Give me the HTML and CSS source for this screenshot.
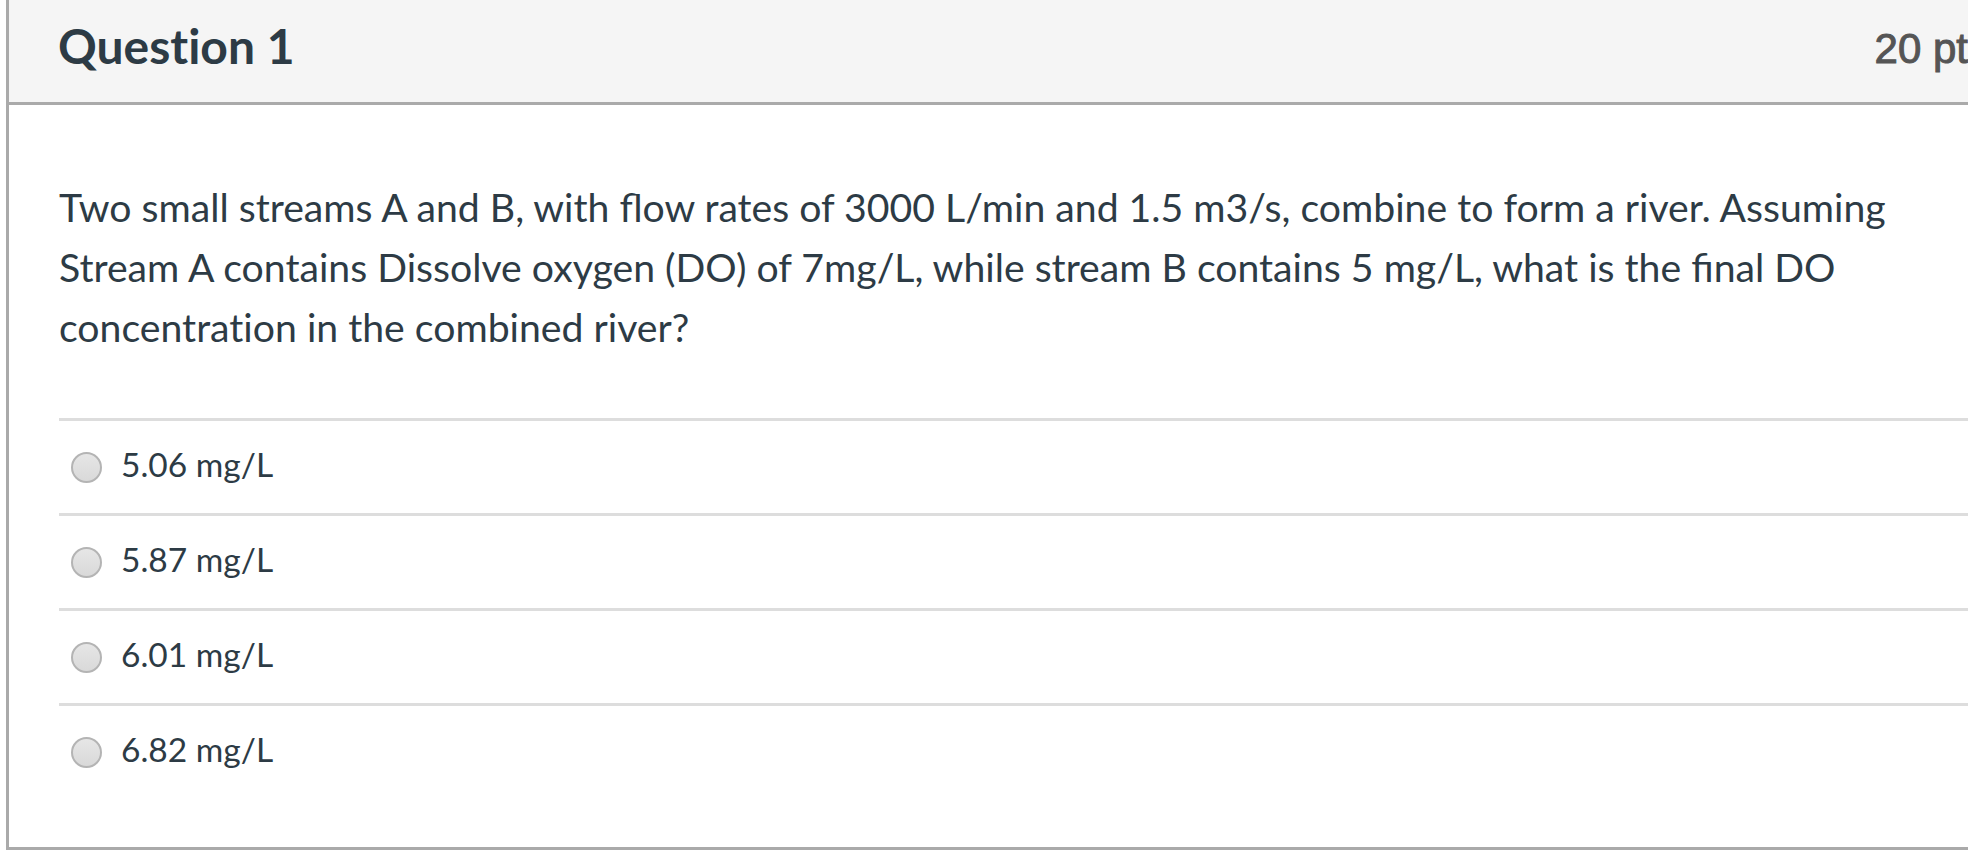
FILE: index.html
```html
<!DOCTYPE html>
<html lang="en">
<head>
<meta charset="utf-8">
<title>Question 1</title>
<link rel="stylesheet" href="styles.css">
</head>
<body>
<div class="question">
  <div class="q-header">
    <span class="q-name">Question 1</span>
    <span class="q-points">20 pts</span>
  </div>
  <div class="q-body">
    <div class="q-text">Two small streams A and B, with ﬂow rates of 3000 L/min and 1.5 m3/s, combine to form a river. Assuming Stream A contains Dissolve oxygen (DO) of 7mg/L, while stream B contains 5 mg/L, what is the ﬁnal DO concentration in the combined river?</div>
    <div class="answers">
      <label class="answer"><span class="radio"></span><span class="answer-text">5.06 mg/L</span></label>
      <label class="answer"><span class="radio"></span><span class="answer-text">5.87 mg/L</span></label>
      <label class="answer"><span class="radio"></span><span class="answer-text">6.01 mg/L</span></label>
      <label class="answer"><span class="radio"></span><span class="answer-text">6.82 mg/L</span></label>
    </div>
  </div>
</div>
</body>
</html>
```

FILE: styles.css
```css
html, body {
  margin: 0;
  padding: 0;
  background: #ffffff;
  overflow: hidden;
}

body {
  font-family: Lato, "Open Sans", sans-serif;
  color: #2d3b45;
  font-variant-ligatures: none;
  font-feature-settings: "liga" 0, "clig" 0;
}

.question {
  margin-left: 6px;
  width: 2036px;
  border: 3px solid #aaaaaa;
  border-top: none;
  box-sizing: border-box;
}

.q-header {
  display: flex;
  justify-content: space-between;
  align-items: flex-start;
  background: #f5f5f5;
  border-bottom: 3px solid #aaaaaa;
  padding: 17px 50px 27px 49px;
  height: 58px;
}

.q-name {
  font-family: Lato, sans-serif;
  font-weight: 700;
  font-size: 48px;
  line-height: 58px;
  color: #2d3b45;
}

.q-points {
  font-family: "Liberation Sans", Arial, sans-serif;
  font-weight: 400;
  font-size: 42px;
  line-height: 48px;
  margin-top: 8px;
  color: #555555;
  -webkit-text-stroke: 1px #555555;
}

.q-body {
  padding: 72px 50px 49px 50px;
}

.q-text {
  max-width: 1850px;
  font-size: 39.2px;
  line-height: 60px;
  margin-bottom: 61px;
}

.answers {
  display: flex;
  flex-direction: column;
}

.answer {
  display: flex;
  align-items: flex-start;
  border-top: 3px solid #dddddd;
  padding: 22px 0 28px 12px;
}

.radio {
  flex: none;
  width: 31px;
  height: 31px;
  margin-top: 9px;
  margin-right: 19px;
  border-radius: 50%;
  box-sizing: border-box;
  border: 2px solid #b4b4b4;
  background: linear-gradient(#e6e6e6, #d9d9d9);
}

.answer-text {
  font-size: 33.5px;
  line-height: 42px;
}
```
